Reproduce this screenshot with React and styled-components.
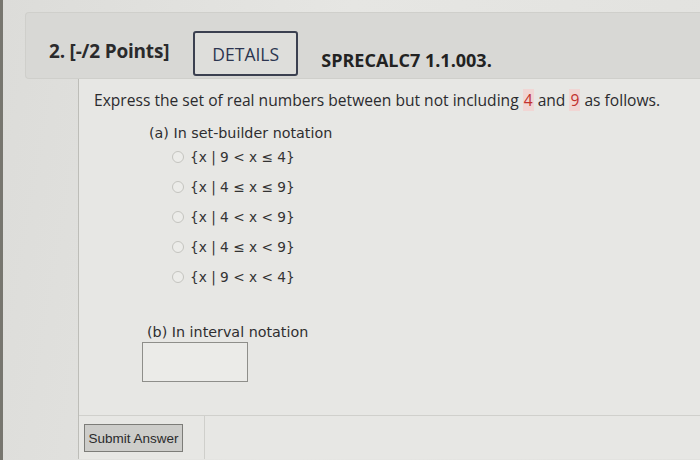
import React from 'react';
import styled, { createGlobalStyle } from 'styled-components';

const Global = createGlobalStyle`
  html, body { margin: 0; padding: 0; }
  body {
    width: 700px;
    height: 460px;
    overflow: hidden;
    background: #dfdfdc;
    font-family: "Open Sans", sans-serif;
  }
`;

const Page = styled.div`
  width: 700px;
  height: 460px;
  box-sizing: border-box;
  border-left: 3px solid #77766f;
  padding: 12px 0 0 22px;
  background: linear-gradient(100deg, #dcdcd9 0%, #e6e6e3 45%, #e2e2df 100%);
`;

const Header = styled.div`
  display: flex;
  align-items: flex-start;
  height: 67px;
  box-sizing: border-box;
  padding: 18px 0 0 23px;
  background: #d8d8d5;
  border: 1px solid #cfcfcb;
  border-right: none;
  border-radius: 4px 0 0 4px;
`;

const Points = styled.span`
  font-weight: 700;
  font-size: 19px;
  line-height: 24px;
  margin-top: 8px;
  color: #2a2a2c;
  letter-spacing: -0.2px;
`;

const DetailsButton = styled.div`
  margin-left: 24px;
  width: 105px;
  height: 45px;
  box-sizing: border-box;
  border: 2px solid #3b4050;
  border-radius: 3px;
  display: flex;
  align-items: center;
  justify-content: center;
  font-size: 17.5px;
  color: #2c3550;
  background: #dededb;
`;

const Code = styled.span`
  margin-left: 23px;
  margin-top: 17px;
  font-weight: 700;
  font-size: 18px;
  line-height: 24px;
  color: #222;
`;

const Body = styled.div`
  margin-left: 53px;
  border-left: 1px solid #bdbdb8;
  height: 380px;
  box-sizing: border-box;
  display: flex;
  flex-direction: column;
  background: #e7e7e4;
`;

const Content = styled.div`
  padding: 10px 0 0 15px;
  flex: 1;
`;

const Prompt = styled.p`
  margin: 0;
  font-size: 15.6px;
  color: #2b2b2e;
`;

const Hi = styled.span`
  color: #c2322f;
  background: #f1d6d4;
  padding: 0 1px;
`;

const Part = styled.div`
  margin-left: ${p => p.$indent}px;
  margin-top: ${p => p.$top}px;
  font-family: "DejaVu Sans", Verdana, sans-serif;
  font-size: 14.3px;
  color: #2e2e30;
`;

const Options = styled.div`
  display: flex;
  flex-direction: column;
  gap: 12px;
  margin: 7px 0 0 78px;
`;

const Option = styled.label`
  display: flex;
  align-items: center;
  gap: 6px;
  height: 18px;
  font-family: "DejaVu Sans", Verdana, sans-serif;
  font-size: 13.7px;
  color: #333;
`;

const Radio = styled.span`
  width: 10px;
  height: 10px;
  border-radius: 50%;
  border: 1px solid #c4c4bf;
  background: #ecece9;
  flex: none;
`;

const AnswerBox = styled.div`
  margin: 2px 0 0 48px;
  width: 106px;
  height: 40px;
  box-sizing: border-box;
  border: 1px solid #8e8e8a;
  background: #ebebe8;
`;

const Footer = styled.div`
  display: flex;
  height: 43px;
  border-top: 1px solid #d0d0cc;
`;

const ButtonCell = styled.div`
  width: 126px;
  padding: 8px 0 0 5px;
  box-sizing: border-box;
  border-right: 1px solid #cfcfcb;
`;

const Submit = styled.button`
  width: 99px;
  height: 28px;
  padding: 0;
  border: 1px solid #7c7c78;
  background: #cdcdca;
  font-family: "Liberation Sans", Arial, sans-serif;
  font-size: 13.5px;
  color: #2a2a2a;
`;

const options = [
  '{x | 9 < x \u2264 4}',
  '{x | 4 \u2264 x \u2264 9}',
  '{x | 4 < x < 9}',
  '{x | 4 \u2264 x < 9}',
  '{x | 9 < x < 4}',
];

export default function App() {
  return (
    <>
      <Global />
      <Page>
        <Header>
          <Points>2. [-/2 Points]</Points>
          <DetailsButton>DETAILS</DetailsButton>
          <Code>SPRECALC7 1.1.003.</Code>
        </Header>
        <Body>
          <Content>
            <Prompt>
              Express the set of real numbers between but not including <Hi>4</Hi> and <Hi>9</Hi> as follows.
            </Prompt>
            <Part $indent={55} $top={14}>(a) In set-builder notation</Part>
            <Options>
              {options.map(o => (
                <Option key={o}>
                  <Radio />
                  {o}
                </Option>
              ))}
            </Options>
            <Part $indent={53} $top={38}>(b) In interval notation</Part>
            <AnswerBox />
          </Content>
          <Footer>
            <ButtonCell>
              <Submit>Submit Answer</Submit>
            </ButtonCell>
          </Footer>
        </Body>
      </Page>
    </>
  );
}
